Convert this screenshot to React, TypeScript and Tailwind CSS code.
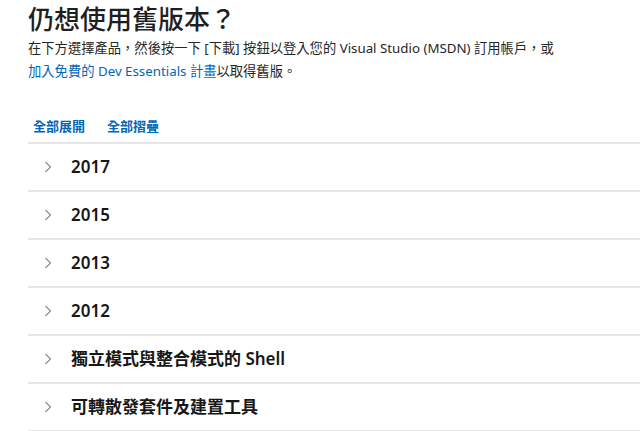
import React from 'react';

const items = ['2017', '2015', '2013', '2012', '獨立模式與整合模式的 Shell', '可轉散發套件及建置工具'];

const font = { fontFamily: '"Noto Sans", "Noto Sans CJK TC", sans-serif' };

function Chevron() {
  return (
    <svg width="8" height="12" viewBox="0 0 8 12" className="shrink-0">
      <path d="M1.5 1 L6.5 6 L1.5 11" fill="none" stroke="#8a8a8a" strokeWidth="1.1" />
    </svg>
  );
}

export default function App() {
  return (
    <div className="min-h-screen bg-white text-[#262626] overflow-hidden" style={font}>
      <div className="pl-[28px]">
        <h1 className="text-[26px] leading-[36px] font-medium pt-[1px] text-[#1f1f1f]">仍想使用舊版本？</h1>
        <p className="text-[13.3px] leading-[23px] text-[#262626]">
          在下方選擇產品，然後按一下 [下載] 按鈕以登入您的 Visual Studio (MSDN) 訂用帳戶，或
          <br />
          <a href="#" className="text-[#0067b8]">加入免費的 Dev Essentials 計畫</a>以取得舊版。
        </p>
        <div className="flex gap-[22px] pl-[5px] mt-[31px] text-[13px] leading-[24px] font-semibold text-[#0067b8]">
          <a href="#">全部展開</a>
          <a href="#">全部摺疊</a>
        </div>
        <div className="mt-[4px] border-t-2 border-[#e6e6e6]">
          {items.map((t) => (
            <div key={t} className="h-[48px] flex items-center border-b-2 border-[#e6e6e6]">
              <div className="w-[43px] flex">
                <div className="ml-[16px] w-[27px]">
                  <Chevron />
                </div>
              </div>
              <span className="text-[17px] font-semibold text-[#171717]">{t}</span>
            </div>
          ))}
        </div>
      </div>
    </div>
  );
}
